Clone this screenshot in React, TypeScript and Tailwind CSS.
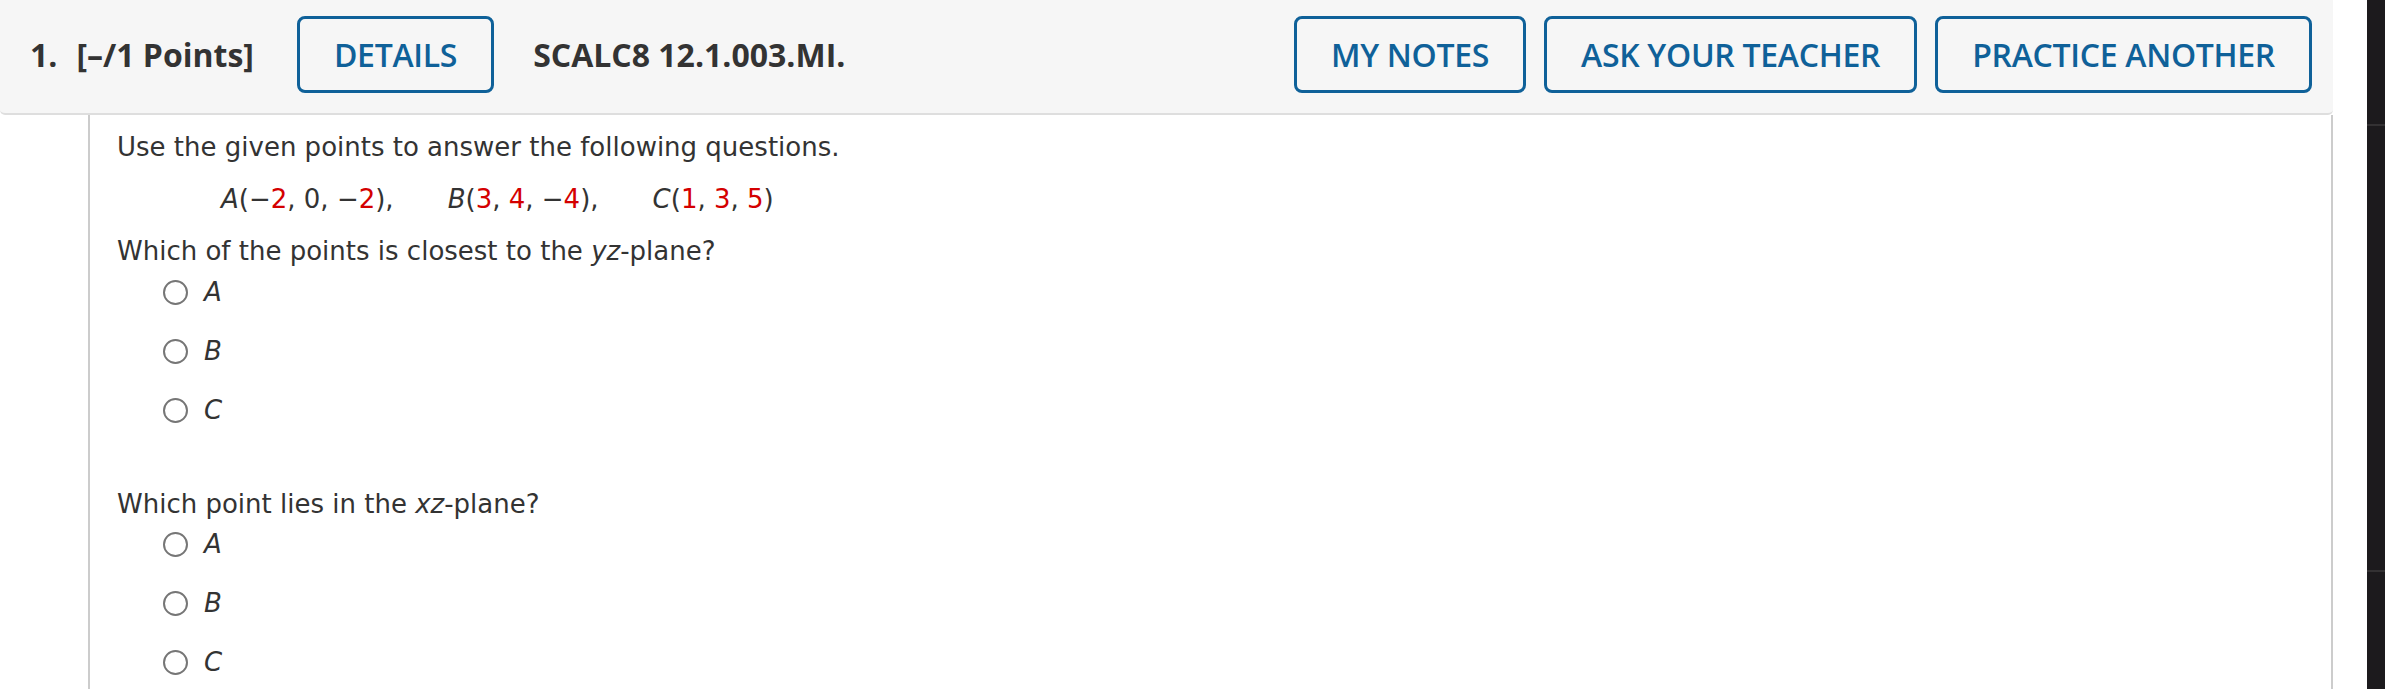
const red = "text-[#d40000]";

function HeaderButton({ label }: { label: string }) {
  return (
    <button className="h-[77px] px-[34px] rounded-[8px] border-[3px] border-[#0f6199] bg-[#f6f6f6] text-[#0f6199] text-[32px] font-semibold tracking-[-0.3px]">
      {label}
    </button>
  );
}

function Radio({ letter }: { letter: string }) {
  return (
    <div className="h-[40px] flex items-center">
      <span className="ml-[46px] w-[25px] h-[25px] rounded-full border-2 border-[#767676] bg-white" />
      <span className="ml-[16px] italic">{letter}</span>
    </div>
  );
}

export default function App() {
  return (
    <div className="w-full h-[689px] flex bg-white overflow-hidden">
      <div className="flex-1 flex flex-col">
        {/* question header */}
        <div
          className="w-[2333px] h-[115px] shrink-0 flex items-center bg-[#f6f6f6] border-b-2 border-[#dedede] rounded-b-[5px] text-[#333] pl-[30px] pr-[21px] pb-[4px]"
          style={{ fontFamily: '"Open Sans", sans-serif' }}
        >
          <span className="text-[32px] font-bold">1.</span>
          <span className="ml-[19px] text-[32px] font-bold">[–/1 Points]</span>
          <div className="ml-[43px]">
            <HeaderButton label="DETAILS" />
          </div>
          <span className="ml-[39px] text-[32px] font-bold">SCALC8 12.1.003.MI.</span>
          <div className="ml-auto flex gap-[18px]">
            <HeaderButton label="MY NOTES" />
            <HeaderButton label="ASK YOUR TEACHER" />
            <HeaderButton label="PRACTICE ANOTHER" />
          </div>
        </div>

        {/* question body */}
        <div
          className="ml-[88px] w-[2245px] flex-1 border-x-2 border-[#cccccc] pl-[27px] pt-[12px] text-[#333] text-[26px]"
          style={{ fontFamily: '"DejaVu Sans", Verdana, sans-serif' }}
        >
          <div className="h-[40px] flex items-center">Use the given points to answer the following questions.</div>
          <div className="mt-[12px] h-[40px] flex items-center pl-[104px] gap-[54px]">
            <span>
              <i>A</i>(−<span className={red}>2</span>, 0, −<span className={red}>2</span>),
            </span>
            <span>
              <i>B</i>(<span className={red}>3</span>, <span className={red}>4</span>, −<span className={red}>4</span>),
            </span>
            <span>
              <i>C</i>(<span className={red}>1</span>, <span className={red}>3</span>, <span className={red}>5</span>)
            </span>
          </div>
          <div className="mt-[12px] h-[40px] flex items-center">
            <span>
              Which of the points is closest to the <i>yz</i>-plane?
            </span>
          </div>
          <div className="mt-[1px] flex flex-col gap-[19px]">
            <Radio letter="A" />
            <Radio letter="B" />
            <Radio letter="C" />
          </div>
          <div className="mt-[54px] h-[40px] flex items-center">
            <span>
              Which point lies in the <i>xz</i>-plane?
            </span>
          </div>
          <div className="flex flex-col gap-[19px]">
            <Radio letter="A" />
            <Radio letter="B" />
            <Radio letter="C" />
          </div>
        </div>
      </div>

      {/* dark window edge */}
      <div className="w-[18px] h-full bg-[#1c1a1d] flex flex-col">
        <div className="mt-[124px] h-[2px] bg-[#333133]" />
        <div className="mt-[444px] h-[2px] bg-[#333133]" />
      </div>
    </div>
  );
}
